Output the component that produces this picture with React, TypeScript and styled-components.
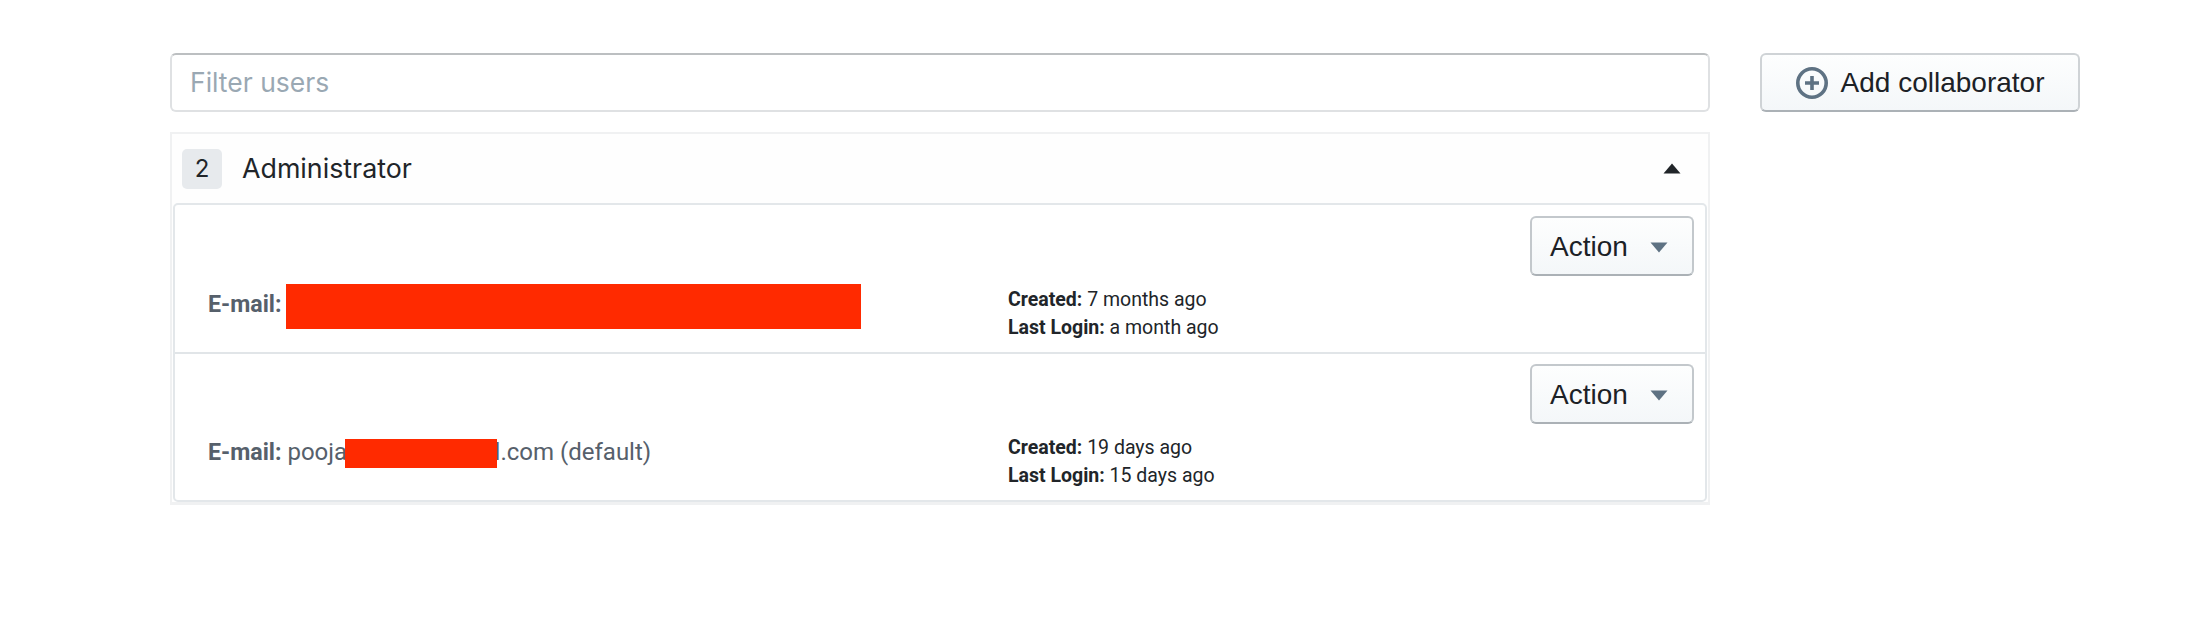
import React from "react";
import styled, { createGlobalStyle } from "styled-components";

const Global = createGlobalStyle`
  html, body { margin: 0; padding: 0; background: #fff; }
  body { font-family: Roboto, "Liberation Sans", sans-serif; color: #212529; }
`;

const Page = styled.div`
  display: flex;
  align-items: flex-start;
  gap: 50px;
  padding: 53px 112px 0 170px;
`;

const Main = styled.div`
  width: 1540px;
  flex: none;
`;

const FilterInput = styled.input`
  display: block;
  box-sizing: border-box;
  width: 100%;
  height: 59px;
  padding: 0 18px 2px;
  border: 2px solid #dfe1e3;
  border-top-color: #bcbfc1;
  border-radius: 6px;
  background: #fff;
  font: 400 26.5px Inter, sans-serif;
  outline: none;
  &::placeholder { color: #9aa8b3; opacity: 1; }
`;

const Panel = styled.section`
  box-sizing: border-box;
  margin-top: 20px;
  border: 2px solid #f0f1f2;
  border-bottom-width: 3px;
  background: #fefefe;
`;

const PanelHeader = styled.header`
  display: flex;
  align-items: center;
  height: 69px;
  padding: 0 27px 0 10px;
`;

const CountBadge = styled.span`
  display: flex;
  align-items: center;
  justify-content: center;
  width: 40px;
  height: 40px;
  border-radius: 5px;
  background: #e7eaed;
  font: 400 24px Inter, sans-serif;
`;

const RoleName = styled.h2`
  flex: 1;
  margin: 0 0 0 20px;
  font: 400 26.8px/1 Inter, sans-serif;
  color: #212529;
`;

const Card = styled.div`
  box-sizing: border-box;
  margin: 0 1px;
  border: 2px solid #e3e7ea;
  border-radius: 5px;
  background: #fff;
`;

const UserRow = styled.article`
  box-sizing: border-box;
  padding: 11px 11px 0 0;
  height: 147px;
  & + & { border-top: 2px solid #e1e5e8; height: 148px; padding-top: 10px; }
`;

const ActionLine = styled.div`
  display: flex;
  justify-content: flex-end;
`;

const ActionButton = styled.button`
  display: flex;
  align-items: center;
  box-sizing: border-box;
  width: 164px;
  height: 60px;
  padding: 2px 0 0 18px;
  border: 2px solid #c3c8cc;
  border-bottom-color: #abb1b6;
  border-radius: 6px;
  background: linear-gradient(#fdfefe, #f4f7f9);
  font: 400 28px "Liberation Sans", Arial, sans-serif;
  color: #1c2126;
`;

const Caret = styled.svg`
  flex: none;
  margin-left: 22px;
`;

const Details = styled.div`
  display: grid;
  grid-template-columns: 800px 1fr;
  padding-left: 33px;
  margin-top: 10px;
`;

const Email = styled.div`
  position: relative;
  align-self: center;
  margin-bottom: 20px;
  font: 400 24px/30px Roboto, sans-serif;
  color: #56606b;
  b { font-weight: 700; font-size: 23.2px; }
`;

const Hidden = styled.span<{ $width: number }>`
  display: inline-block;
  width: ${(p) => p.$width}px;
`;

const Redaction = styled.span<{ $left: number; $top: number; $width: number; $height: number }>`
  position: absolute;
  left: ${(p) => p.$left}px;
  top: ${(p) => p.$top}px;
  width: ${(p) => p.$width}px;
  height: ${(p) => p.$height}px;
  background: #ff2a00;
`;

const Meta = styled.div`
  font: 400 19.5px/28px Roboto, sans-serif;
  color: #212529;
  b { font-weight: 700; }
`;

const AddButton = styled.button`
  display: flex;
  align-items: center;
  justify-content: center;
  flex: none;
  box-sizing: border-box;
  width: 320px;
  height: 59px;
  padding: 0;
  border: 2px solid #cfd3d6;
  border-bottom-color: #abb1b6;
  border-radius: 6px;
  background: linear-gradient(#fdfefe, #f4f7f9);
  font: 400 28px "Liberation Sans", Arial, sans-serif;
  color: #1c2126;
`;

const PlusIcon = styled.svg`
  flex: none;
  margin-right: 13px;
`;

const users = [
  {
    created: "7 months ago",
    login: "a month ago",
    email: "",
    tail: "",
    gap: 0,
    red: { left: 78, top: -5, width: 575, height: 45 },
  },
  {
    created: "19 days ago",
    login: "15 days ago",
    email: "pooja",
    tail: "l.com (default)",
    gap: 147.5,
    red: { left: 137, top: 2, width: 152, height: 29 },
  },
];

export default function App() {
  return (
    <>
      <Global />
      <Page>
        <Main>
          <FilterInput placeholder="Filter users" />
          <Panel>
            <PanelHeader>
              <CountBadge>2</CountBadge>
              <RoleName>Administrator</RoleName>
              <svg width="18" height="11" viewBox="0 0 18 11">
                <path d="M9 0.5 L17.5 10.5 H0.5 Z" fill="#212529" />
              </svg>
            </PanelHeader>
            <Card>
              {users.map((u, i) => (
                <UserRow key={i}>
                  <ActionLine>
                    <ActionButton>
                      Action
                      <Caret width="18" height="11" viewBox="0 0 18 11">
                        <path d="M0.5 0.5 H17.5 L9 10.5 Z" fill="#5e7283" />
                      </Caret>
                    </ActionButton>
                  </ActionLine>
                  <Details>
                    <Email>
                      <b>E-mail:</b> {u.email}
                      {u.gap ? <Hidden $width={u.gap} /> : null}
                      {u.tail}
                      <Redaction $left={u.red.left} $top={u.red.top} $width={u.red.width} $height={u.red.height} />
                    </Email>
                    <Meta>
                      <div><b>Created:</b> {u.created}</div>
                      <div><b>Last Login:</b> {u.login}</div>
                    </Meta>
                  </Details>
                </UserRow>
              ))}
            </Card>
          </Panel>
        </Main>
        <AddButton>
          <PlusIcon width="32" height="32" viewBox="0 0 32 32">
            <circle cx="16" cy="16" r="14.2" fill="none" stroke="#5e7283" strokeWidth="3.6" />
            <path d="M16 9 V23 M9 16 H23" stroke="#5e7283" strokeWidth="3.6" />
          </PlusIcon>
          Add collaborator
        </AddButton>
      </Page>
    </>
  );
}
